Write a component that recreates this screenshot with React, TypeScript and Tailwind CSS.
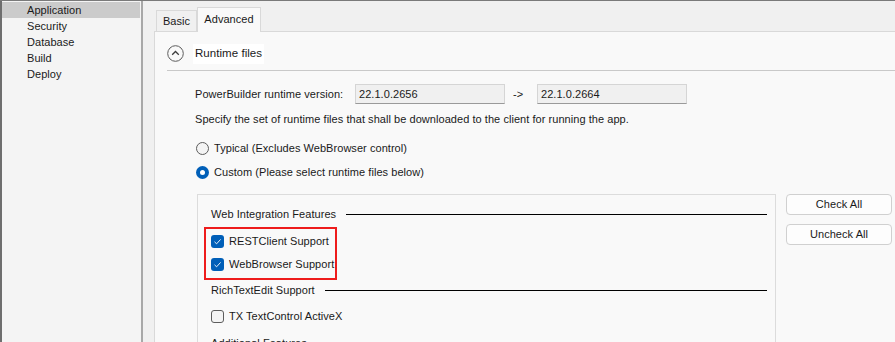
import React from 'react';

const navItems = ['Application', 'Security', 'Database', 'Build', 'Deploy'];

const Radio = ({ checked, label }: { checked?: boolean; label: string }) => (
  <div className="flex h-[24px] items-center whitespace-nowrap">
    {checked ? (
      <span className="mr-[5px] flex h-[13px] w-[13px] items-center justify-center rounded-full bg-[#005fb8]">
        <span className="h-[5px] w-[5px] rounded-full bg-white" />
      </span>
    ) : (
      <span className="mr-[5px] h-[13px] w-[13px] rounded-full border border-[#5d5d5d] bg-[#f4f4f4]" />
    )}
    <span>{label}</span>
  </div>
);

const Checkbox = ({ checked, label }: { checked?: boolean; label: string }) => (
  <div className="flex h-[23px] items-center whitespace-nowrap">
    {checked ? (
      <span className="mr-[5px] flex h-[13px] w-[13px] shrink-0 items-center justify-center rounded-[3px] bg-[#005fb8]">
        <svg width="9" height="9" viewBox="0 0 9 9" fill="none">
          <path d="M1.5 4.8 L3.6 6.8 L7.6 2.4" stroke="#ffffff" strokeWidth="0.9" />
        </svg>
      </span>
    ) : (
      <span className="mr-[5px] h-[13px] w-[13px] shrink-0 rounded-[3px] border border-[#5d5d5d] bg-[#f4f4f4]" />
    )}
    <span>{label}</span>
  </div>
);

const SectionTitle = ({ label, tall }: { label: string; tall?: boolean }) => (
  <div className={`flex items-center whitespace-nowrap pr-[8px] ${tall ? 'h-[24px]' : 'h-[20px]'}`}>
    <span>{label}</span>
    <span className="ml-[10px] h-px flex-1 bg-black" />
  </div>
);

export default function App() {
  return (
    <div
      className="flex h-[342px] w-[895px] overflow-hidden border-t border-[#7a7a7a] bg-[#f0f0f0] text-[11px] leading-none tracking-[0.05px] text-[#1a1a1a]"
      style={{ fontFamily: '"Segoe UI", "Liberation Sans", Arial, sans-serif' }}
    >
      {/* tree */}
      <div className="w-[143px] shrink-0 border-l-2 border-r-2 border-l-[#6e6e6e] border-r-[#a8a8a8] bg-[#f4f4f4] pt-[1px]">
        {navItems.map((item, i) => (
          <div
            key={item}
            className={`mr-[1px] flex h-[16px] items-center pl-[25px] ${i === 0 ? 'bg-[#cbcbcb]' : ''}`}
          >
            {item}
          </div>
        ))}
      </div>

      {/* tab control */}
      <div className="flex flex-1 flex-col pl-[11px] pt-[6px]">
        <div className="flex h-[24px] items-end pl-[2px]">
          <div className="flex h-[21px] w-[41px] items-center justify-center border border-b-0 border-[#d9d9d9] bg-[#f0f0f0]">
            Basic
          </div>
          <div className="relative top-[1px] flex h-[25px] w-[64px] items-center justify-center border border-b-0 border-[#d9d9d9] bg-[#f9f9f9] pb-[2px]">
            Advanced
          </div>
        </div>
        <div className="flex-1 border-l border-t border-[#d9d9d9] bg-[#f9f9f9] pl-[12px]">
          {/* header */}
          <div className="flex h-[39px] items-center border-b border-[#c9c9c9] pt-[5px]">
            <svg width="17" height="17" viewBox="0 0 17 17" fill="none">
              <circle cx="8.5" cy="8.5" r="7.8" stroke="#5c5c5c" strokeWidth="1" />
              <path d="M5.2 9.8 L8.5 6.5 L11.8 9.8" stroke="#3c3c3c" strokeWidth="1.3" />
            </svg>
            <span className="ml-[9px] flex h-[20px] items-center bg-white px-[2px] text-[11.5px]">Runtime files</span>
          </div>

          <div className="pl-[28px]">
            <div className="mt-[13px] flex h-[20px] items-center whitespace-nowrap">
              <span className="w-[160px]">PowerBuilder runtime version:</span>
              <div className="flex h-[20px] w-[150px] items-center border border-[#d5d5d5] border-b-[#9a9a9a] bg-[#f0f0f0] pl-[3px]">
                22.1.0.2656
              </div>
              <span className="ml-[8px] w-[24px]">-&gt;</span>
              <div className="flex h-[20px] w-[150px] items-center border border-[#d5d5d5] border-b-[#9a9a9a] bg-[#f0f0f0] pl-[3px]">
                22.1.0.2664
              </div>
            </div>
            <div className="mt-[8px] flex h-[15px] items-center whitespace-nowrap">
              Specify the set of runtime files that shall be downloaded to the client for running the app.
            </div>
            <div className="mt-[9px] pl-[1px]">
              <Radio label="Typical (Excludes WebBrowser control)" />
              <Radio checked label="Custom (Please select runtime files below)" />
            </div>

            <div className="ml-[2px] mt-[10px] flex items-start">
              <div className="h-[200px] w-[579px] border border-[#dcdcdc] pl-[13px] pt-[7px]">
                <SectionTitle tall label="Web Integration Features" />
                <div className="-ml-[7px] mt-[1px] w-[133px] border-2 border-[#ee1c1c] pb-[2px] pl-[5px] pt-[1px]">
                  <Checkbox checked label="RESTClient Support" />
                  <Checkbox checked label="WebBrowser Support" />
                </div>
                <SectionTitle label="RichTextEdit Support" />
                <div className="mt-[5px]">
                  <Checkbox label="TX TextControl ActiveX" />
                </div>
                <div className="mt-[5px]">
                  <SectionTitle label="Additional Features" />
                </div>
              </div>
              <div className="ml-[10px] flex flex-col gap-[9px]">
                <button className="h-[21px] w-[106px] rounded-[4px] border border-[#d0d0d0] bg-[#fdfdfd] text-[11px]">
                  Check All
                </button>
                <button className="h-[21px] w-[106px] rounded-[4px] border border-[#d0d0d0] bg-[#fdfdfd] text-[11px]">
                  Uncheck All
                </button>
              </div>
            </div>
          </div>
        </div>
      </div>
    </div>
  );
}
